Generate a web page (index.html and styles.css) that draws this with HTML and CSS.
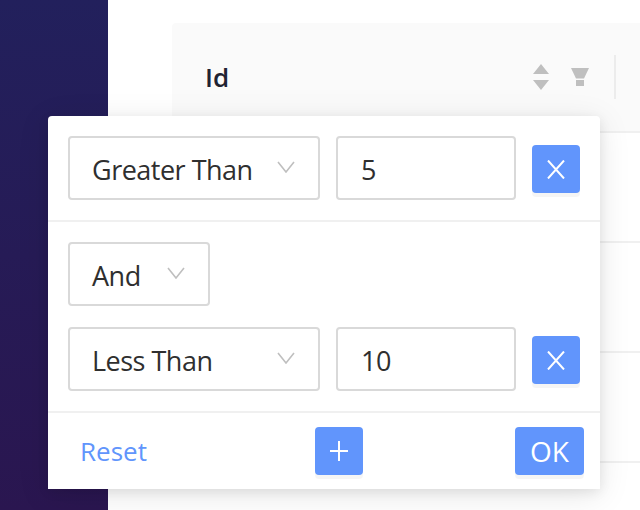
FILE: index.html
```html
<!DOCTYPE html>
<html lang="en">

<head>
  <meta charset="UTF-8" />
  <meta name="viewport" content="width=device-width, initial-scale=1.0" />
  <title>Table Filter</title>
  <link rel="stylesheet" href="styles.css">
</head>

<body>
  <div class="layout">
    <div class="sidebar"></div>
    <div class="content">
      <div class="table">
        <div class="table-head">
          <span class="head-title">Id</span>
          <svg class="sort-icon" width="16" height="26" viewBox="0 0 16 26">
            <path d="M8 0 L16 10 L0 10 Z M0 16 L16 16 L8 26 Z" fill="#bfbfbf" />
          </svg>
          <svg class="filter-icon" width="18" height="18" viewBox="0 0 18 18">
            <path d="M0 0 H18 L13 10.5 H5 Z M5 12 H13 V18 H5 Z" fill="#bfbfbf" />
          </svg>
          <span class="head-divider"></span>
        </div>
        <div class="table-row"></div>
        <div class="table-row"></div>
        <div class="table-row"></div>
        <div class="table-row"></div>
        <div class="table-row">4</div>
      </div>
    </div>
  </div>

  <div class="filter-popup">
    <div class="filter-section">
      <div class="filter-row">
        <div class="select select-wide">
          <span>Greater Than</span>
          <svg class="chevron" width="18" height="12" viewBox="0 0 18 12"><path d="M1 1 L9 11 L17 1" /></svg>
        </div>
        <div class="input">5</div>
        <button class="button button-remove">
          <svg width="18" height="19" viewBox="0 0 18 19"><path d="M1 0.5 L17 18.5 M17 0.5 L1 18.5" /></svg>
        </button>
      </div>
    </div>
    <div class="filter-section filter-section-second">
      <div class="select select-small">
        <span>And</span>
        <svg class="chevron" width="18" height="12" viewBox="0 0 18 12"><path d="M1 1 L9 11 L17 1" /></svg>
      </div>
      <div class="filter-row">
        <div class="select select-wide">
          <span>Less Than</span>
          <svg class="chevron" width="18" height="12" viewBox="0 0 18 12"><path d="M1 1 L9 11 L17 1" /></svg>
        </div>
        <div class="input">10</div>
        <button class="button button-remove">
          <svg width="18" height="19" viewBox="0 0 18 19"><path d="M1 0.5 L17 18.5 M17 0.5 L1 18.5" /></svg>
        </button>
      </div>
    </div>
    <div class="filter-footer">
      <a class="reset-link">Reset</a>
      <button class="button button-add">
        <svg width="18" height="20" viewBox="0 0 18 20"><path d="M9 0 V20 M0 10 H18" /></svg>
      </button>
      <button class="button button-ok">OK</button>
    </div>
  </div>
</body>

</html>
```

FILE: styles.css
```css
* {
  margin: 0;
  padding: 0;
  box-sizing: border-box;
}

body {
  width: 640px;
  height: 510px;
  overflow: hidden;
  background: #ffffff;
  font-family: "Open Sans", "Noto Sans", sans-serif;
  position: relative;
}

.layout {
  display: flex;
  height: 510px;
  overflow: hidden;
}

.sidebar {
  width: 108px;
  background: linear-gradient(180deg, #22205c 0%, #2a1650 100%);
}

.content {
  flex: 1;
  padding: 23px 0 0 64px;
}

.table-head {
  display: flex;
  align-items: center;
  height: 110px;
  padding-left: 33px;
  background: #fafafa;
  border-bottom: 2px solid #f0f0f0;
  border-top-left-radius: 4px;
}

.head-title {
  font-size: 26px;
  font-weight: 600;
  color: #1f2333;
}

.sort-icon {
  margin-left: auto;
}

.filter-icon {
  margin-left: 22px;
}

.head-divider {
  width: 2px;
  height: 44px;
  margin: 0 24px 0 25px;
  background: #ececec;
}

.table-row {
  height: 110px;
  padding: 38px 0 0 33px;
  border-bottom: 2px solid #f0f0f0;
  font-size: 26px;
  color: #1f2333;
}

/* Filter dropdown over the table */
.filter-popup {
  position: absolute;
  left: 48px;
  top: 116px;
  width: 552px;
  height: 373px;
  background: #ffffff;
  border-radius: 4px 4px 0 0;
  box-shadow:
    0 6px 32px rgba(0, 0, 0, 0.1),
    0 3px 12px rgba(0, 0, 0, 0.08);
}

.filter-section {
  height: 106px;
  padding: 20px 20px 0;
  border-bottom: 2px solid #f0f0f0;
}

.filter-section-second {
  height: 191px;
}

.filter-row {
  display: flex;
  align-items: center;
  gap: 16px;
}

.select,
.input {
  display: flex;
  align-items: center;
  height: 64px;
  padding-top: 2px;
  border: 2px solid #d9d9d9;
  border-radius: 4px;
  font-size: 27px;
  letter-spacing: -0.5px;
  color: #2f2f2f;
}

.select {
  justify-content: space-between;
  padding-left: 22px;
  padding-right: 23px;
}

.select-wide {
  width: 252px;
}

.select-small {
  width: 142px;
  margin-bottom: 21px;
}

.input {
  width: 180px;
  padding-left: 23px;
}

.chevron {
  margin-top: -4px;
}

.chevron path {
  fill: none;
  stroke: #bfbfbf;
  stroke-width: 1.6;
}

.button {
  display: flex;
  align-items: center;
  justify-content: center;
  height: 48px;
  border: none;
  border-radius: 4px;
  background: #6195fc;
  color: #ffffff;
  font-family: inherit;
  font-size: 28px;
  box-shadow: 0 4px 0 rgba(0, 0, 0, 0.04);
}

.button svg path {
  fill: none;
  stroke: #ffffff;
  stroke-width: 2;
}

.button-remove,
.button-add {
  width: 48px;
}

.button-remove {
  margin-top: 2px;
}

.filter-footer {
  display: flex;
  align-items: center;
  height: 76px;
  padding: 0 16px 0 32px;
}

.reset-link {
  width: 235px;
  font-size: 26px;
  color: #6195fc;
}

.button-ok {
  width: 69px;
  margin-left: auto;
}
```
